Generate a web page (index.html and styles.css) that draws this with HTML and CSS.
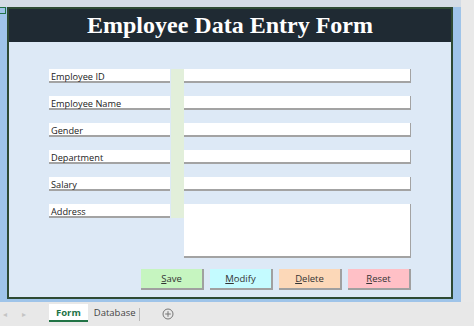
FILE: index.html
```
<!DOCTYPE html>
<html lang="en">
<head>
    <meta charset="UTF-8">
    <title>Employee Data Entry Form</title>
    <link rel="stylesheet" href="styles.css">
</head>
<body>
    <div class="header-strip"></div>
    <div class="main">
        <div class="gutter"><span class="cell-mark"></span></div>
        <div class="panel">
            <div class="title">Employee Data Entry Form</div>
            <div class="form-body">
                <div class="fields">
                    <div class="label">Employee ID</div><div></div><div class="input"></div>
                    <div class="label">Employee Name</div><div></div><div class="input"></div>
                    <div class="label">Gender</div><div></div><div class="input"></div>
                    <div class="label">Department</div><div></div><div class="input"></div>
                    <div class="label">Salary</div><div></div><div class="input"></div>
                    <div class="label">Address</div><div></div><div class="input address"></div>
                </div>
                <div class="buttons">
                    <div class="btn save"><u>S</u>ave</div>
                    <div class="btn modify"><u>M</u>odify</div>
                    <div class="btn delete"><u>D</u>elete</div>
                    <div class="btn reset"><u>R</u>eset</div>
                </div>
            </div>
        </div>
        <div class="right-gap"></div>
    </div>
    <div class="tabs">
        <span class="arrow">&#9666;</span>
        <span class="arrow">&#9656;</span>
        <div class="tab active">Form</div>
        <div class="tab">Database</div>
        <span class="sep"></span>
        <span class="add">
            <svg width="12" height="12" viewBox="0 0 12 12">
                <circle cx="6" cy="6" r="5" fill="none" stroke="#777" stroke-width="1"/>
                <path d="M6 3.2v5.6M3.2 6h5.6" stroke="#777" stroke-width="1"/>
            </svg>
        </span>
    </div>
    <div class="scroll"></div>
</body>
</html>
```

FILE: styles.css
```
body, html {
    margin: 0;
    padding: 0;
    height: 100%;
    overflow: hidden;
    background-color: #9fc4e9;
    font-family: 'Open Sans', sans-serif;
}
.header-strip {
    height: 7px;
    width: 461px;
    background-color: #d4dce5;
}
.main {
    display: flex;
    height: 295px;
    width: 461px;
    background-color: #9fc4e9;
}
.gutter {
    width: 7px;
    position: relative;
}
.cell-mark {
    position: absolute;
    top: 0;
    left: 0;
    width: 5px;
    height: 5px;
    border: 1px solid #217346;
    border-left: none;
}
.panel {
    width: 442px;
    height: 288px;
    border: 2px solid #2e4a33;
    background-color: #dde9f6;
    display: flex;
    flex-direction: column;
}
.title {
    height: 33px;
    background-color: #1f2a33;
    color: #ffffff;
    font-family: 'Liberation Serif', serif;
    font-weight: bold;
    font-size: 24px;
    line-height: 33px;
    text-align: center;
}
.form-body {
    padding: 27px 0 0 40px;
}
.fields {
    display: grid;
    grid-template-columns: 122px 13px 227px;
    grid-template-rows: repeat(5, 14px) 54px;
    row-gap: 13px;
    background: linear-gradient(#e2efda, #e2efda) no-repeat 122px -5px / 13px 154px;
}
.label {
    align-self: start;
    height: 14px;
    background-color: #ffffff;
    border-bottom: 2px solid #a3a3a3;
    box-sizing: border-box;
    font-size: 9.2px;
    line-height: 12px;
    color: #222;
    padding-left: 2px;
    padding-top: 2px;
    width: 121px;
}
.input {
    background-color: #ffffff;
    border-bottom: 2px solid #a3a3a3;
    border-right: 1px solid #a3a3a3;
    box-sizing: border-box;
}
.buttons {
    display: flex;
    justify-content: flex-end;
    gap: 6px;
    width: 362px;
    margin-top: 11px;
}
.btn {
    width: 63px;
    height: 21px;
    box-sizing: border-box;
    border-right: 2px solid #a0a0a0;
    border-bottom: 2px solid #a0a0a0;
    font-size: 9.5px;
    line-height: 20px;
    text-align: center;
    color: #333;
}
.save { background-color: #c6f5c0; }
.modify { background-color: #c4fbff; }
.delete { background-color: #fcd8b8; }
.reset { background-color: #ffc0c6; }
.tabs {
    position: absolute;
    left: 0;
    top: 302px;
    width: 474px;
    height: 24px;
    background-color: #e8e8e8;
    display: flex;
    align-items: flex-start;
}
.arrow {
    color: #c4c4c4;
    font-size: 8px;
    line-height: 24px;
    margin-left: 3px;
    width: 16px;
}
.tab {
    margin-top: 2px;
    height: 18px;
    line-height: 18px;
    font-size: 9.5px;
    color: #444;
    padding: 0 3px 0 6px;
}
.tab.active {
    margin-left: 11px;
    background-color: #ffffff;
    color: #217346;
    font-weight: bold;
    border-bottom: 2px solid #217346;
    height: 16px;
    padding: 0 7px;
}
.sep {
    margin-top: 6px;
    width: 1px;
    height: 13px;
    background-color: #b8b8b8;
}
.add {
    margin: 6px 0 0 22px;
    display: flex;
}
.scroll {
    position: absolute;
    right: 0;
    top: 0;
    width: 13px;
    height: 302px;
    background-color: #e9e9e9;
}
```
